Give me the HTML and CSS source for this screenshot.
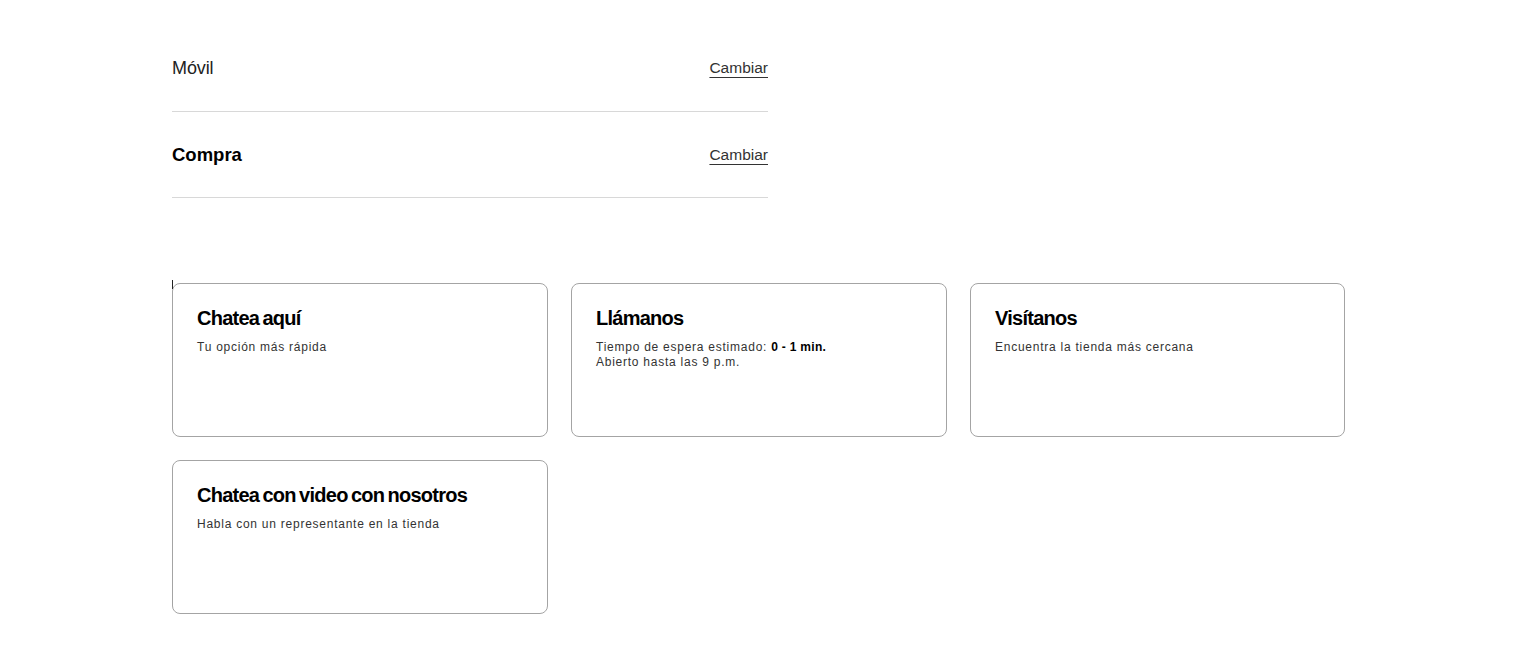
FILE: index.html
```html
<!DOCTYPE html>
<html lang="es">
<head>
<meta charset="utf-8">
<title>Contacto</title>
<link rel="stylesheet" href="styles.css">
</head>
<body>
<main class="page">
  <section class="summary">
    <div class="row">
      <span class="row-label">Móvil</span>
      <a class="change" href="#">Cambiar</a>
    </div>
    <div class="row">
      <span class="row-label bold">Compra</span>
      <a class="change" href="#">Cambiar</a>
    </div>
  </section>

  <section class="cards">
    <span class="mark"></span>
    <div class="card">
      <h3 class="card-title">Chatea aquí</h3>
      <p class="card-text">Tu opción más rápida</p>
    </div>
    <div class="card">
      <h3 class="card-title">Llámanos</h3>
      <p class="card-text">Tiempo de espera estimado: <b>0 - 1 min.</b><br>Abierto hasta las 9 p.m.</p>
    </div>
    <div class="card">
      <h3 class="card-title">Visítanos</h3>
      <p class="card-text">Encuentra la tienda más cercana</p>
    </div>
    <div class="card">
      <h3 class="card-title">Chatea con video con nosotros</h3>
      <p class="card-text">Habla con un representante en la tienda</p>
    </div>
  </section>
</main>
</body>
</html>
```

FILE: styles.css
```css
* { box-sizing: border-box; }
html, body { margin: 0; padding: 0; background: #fff; }
body {
  font-family: "Liberation Sans", Arial, sans-serif;
  color: #000;
}
.page {
  padding: 25px 0 0 172px;
}
.summary {
  width: 596px;
}
.row {
  display: flex;
  justify-content: space-between;
  align-items: center;
  height: 86px;
  border-bottom: 1px solid #d8d8d8;
}
.row:first-child {
  height: 87px;
}
.row-label {
  font-size: 18px;
  line-height: 22px;
  color: #222;
  letter-spacing: -0.1px;
}
.row-label.bold {
  font-weight: 700;
  color: #000;
  font-size: 18.5px;
  letter-spacing: 0;
}
.change {
  font-size: 15.5px;
  line-height: 20px;
  color: #333;
  text-decoration: underline;
  text-decoration-color: #333;
  text-underline-offset: 4px;
  text-decoration-thickness: 1px;
}
.cards {
  position: relative;
  margin-top: 85px;
  display: grid;
  grid-template-columns: 376px 376px 375px;
  gap: 23px;
}
.mark {
  position: absolute;
  left: 0;
  top: -3px;
  width: 1px;
  height: 9px;
  background: #222;
}
.card {
  height: 154px;
  border: 1px solid #a4a4a4;
  border-radius: 8px;
  padding: 22px 24px;
}
.card-title {
  margin: 0;
  font-size: 20px;
  line-height: 24px;
  font-weight: 700;
  letter-spacing: -0.75px;
  word-spacing: -1.5px;
  color: #000;
}
.card-text {
  margin: 10px 0 0;
  font-size: 12px;
  line-height: 15px;
  color: #333;
  letter-spacing: 0.75px;
}
.card-text b {
  color: #000;
  font-weight: 700;
  letter-spacing: 0.3px;
}
```
